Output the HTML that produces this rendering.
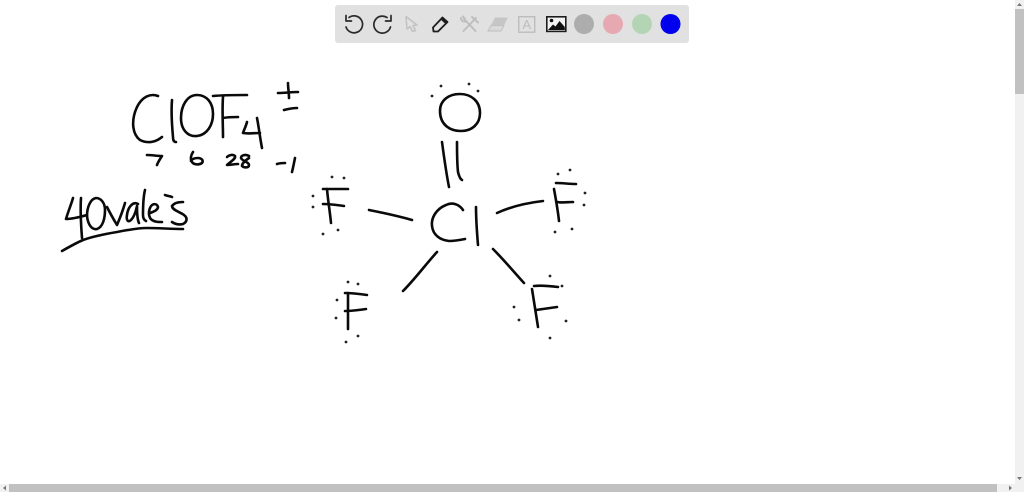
<!DOCTYPE html>
<html lang="en">
<head>
<meta charset="utf-8">
<title>ClOF4+ Lewis structure whiteboard</title>
<style>
html,body{margin:0;padding:0;width:1024px;height:492px;overflow:hidden;background:#fff;font-family:"Liberation Sans",sans-serif}
#page{position:relative;width:1024px;height:492px;overflow:hidden;background:#fff}
svg{position:absolute;left:0;top:0}
.ink path{fill:none;stroke:#0a0a0a;stroke-width:2.6;stroke-linecap:round;stroke-linejoin:round}
.vs{position:absolute;right:0;top:0;width:9px;height:492px;background:#f1f1f1}
.vt{position:absolute;left:0;top:9px;width:9px;height:85px;background:#c1c1c1}
.hs{position:absolute;left:0;bottom:0;width:1015px;height:8px;background:#f1f1f1}
.ht{position:absolute;left:9px;top:0;width:988px;height:8px;background:#c1c1c1}
</style>
</head>
<body>
<div id="page">
<div class="vs"><div class="vt"></div></div>
<div class="hs"><div class="ht"></div></div>
<svg width="1024" height="492" viewBox="0 0 1024 492" role="img" aria-label="ClOF4 plus: 7, 6, 28, minus 1; 40 valence electrons; Lewis structure with Cl bonded to O and four F">
<g class="ink">
<!-- ClOF4 -->
<path d="M158 96C150 93 142 97 137 107C131 120 132 134 140 140C148 144 156 142 162 137"/>
<path d="M172 100C171 112 172 126 173 137C173 140 174 142 176 142"/>
<path d="M197 95C187 95 181 106 181 118C181 130 188 137 197 136C207 135 213 125 213 114C213 103 207 95 197 95Z"/>
<path d="M213 96C224 95 236 95 247 95"/>
<path d="M223 97C222 110 223 124 223 137"/>
<path d="M223 118C228 117 233 117 238 117"/>
<path d="M247 122C246 126 244 130 243 133C249 134 254 133 260 133"/>
<path d="M257 118C259 128 260 138 262 148"/>
<!-- plus minus -->
<path d="M278 93C285 93 291 92 298 92"/>
<path d="M288 83C288 88 289 93 289 98"/>
<path d="M284 110C288 109 293 108 297 108"/>
<!-- valence counts -->
<path d="M147 155C152 155 157 156 162 156C160 159 158 162 157 165"/>
<path d="M193 152C191 155 190 159 192 162C194 165 199 165 202 163C204 160 201 158 198 158C195 158 192 159 191 161"/>
<path d="M227 157C229 155 233 154 235 156C236 159 230 162 227 165C231 165 234 164 238 164"/>
<path d="M249 156C246 154 241 155 241 158C242 161 249 162 249 165C249 168 244 168 242 166C242 163 246 160 249 158"/>
<path d="M277 164C280 163 282 163 285 163"/>
<path d="M295 158C294 163 293 168 292 172"/>
<!-- 40 vale's -->
<path d="M73 198C71 205 68 212 66 219C73 219 80 217 87 215"/>
<path d="M81 198C80 212 81 225 82 238"/>
<path d="M96 198C90 199 87 208 87 216C88 225 92 230 97 229C103 227 105 218 105 210C105 203 101 198 96 198Z"/>
<path d="M107 207C110 213 114 220 117 225C120 218 123 210 125 203"/>
<path d="M138 204C133 201 128 207 127 215C126 220 128 223 131 220C134 217 136 211 137 206C137 212 137 219 139 223"/>
<path d="M145 190C143 198 143 207 143 215C143 218 144 220 146 221"/>
<path d="M150 213C153 212 158 210 158 207C157 203 152 203 150 208C148 213 149 218 152 220C155 222 158 222 162 222"/>
<path d="M165 195C167 196 170 196 172 197"/>
<path d="M183 202C179 202 174 203 172 206C172 210 180 212 184 215C188 218 187 222 183 224C179 225 175 224 172 222"/>
<path d="M62 251C69 247 76 243 83 240C94 236 105 234 117 232C127 230 137 228 147 228C159 228 171 229 183 229"/>
<!-- O and double bond -->
<path d="M460 94C449 94 440 100 440 111C440 124 449 131 461 131C472 131 480 124 480 113C480 101 471 94 460 94Z"/>
<path d="M442 142C444 157 446 172 449 187"/>
<path d="M457 142C457 153 457 163 458 172C459 176 460 179 462 180"/>
<!-- Cl -->
<path d="M463 210C459 204 452 202 446 205C436 209 431 218 432 226C433 235 440 240 449 241C454 241 460 240 465 239"/>
<path d="M476 207C476 220 477 233 478 245"/>
<!-- bonds -->
<path d="M369 210C384 213 398 216 412 220"/>
<path d="M497 213C510 207 526 203 543 201"/>
<path d="M437 252C426 264 415 279 403 291"/>
<path d="M493 249C504 260 514 272 524 283"/>
<!-- F left -->
<path d="M323 189C331 189 340 189 348 189"/>
<path d="M327 189C328 201 330 212 331 223"/>
<path d="M323 204C330 204 337 205 344 206"/>
<!-- F right -->
<path d="M556 183C563 183 569 184 576 184"/>
<path d="M554 189C556 200 558 211 559 221"/>
<path d="M557 202C562 203 568 202 573 202"/>
<!-- F bottom left -->
<path d="M345 293C352 293 360 294 367 295"/>
<path d="M348 293C348 305 348 317 348 329"/>
<path d="M345 311C352 311 359 310 366 309"/>
<!-- F bottom right -->
<path d="M534 286C542 285 550 286 558 287"/>
<path d="M532 289C534 302 536 315 538 327"/>
<path d="M536 310C543 309 550 308 557 307"/>
</g>
<!-- lone pair dots -->
<g fill="#222">
<circle cx="432" cy="96" r="1.4"/><circle cx="441" cy="86" r="1.4"/><circle cx="469" cy="84" r="1.4"/><circle cx="478" cy="91" r="1.4"/>
<circle cx="332" cy="177" r="1.4"/><circle cx="344" cy="178" r="1.4"/><circle cx="313" cy="196" r="1.4"/><circle cx="313" cy="207" r="1.4"/><circle cx="323" cy="234" r="1.4"/><circle cx="338" cy="230" r="1.4"/>
<circle cx="558" cy="174" r="1.4"/><circle cx="570" cy="170" r="1.4"/><circle cx="585" cy="193" r="1.4"/><circle cx="584" cy="205" r="1.4"/><circle cx="555" cy="232" r="1.4"/><circle cx="572" cy="229" r="1.4"/>
<circle cx="348" cy="282" r="1.4"/><circle cx="358" cy="284" r="1.4"/><circle cx="337" cy="300" r="1.4"/><circle cx="336" cy="318" r="1.4"/><circle cx="346" cy="342" r="1.4"/><circle cx="358" cy="336" r="1.4"/>
<circle cx="550" cy="276" r="1.4"/><circle cx="562" cy="286" r="1.4"/><circle cx="514" cy="307" r="1.4"/><circle cx="519" cy="320" r="1.4"/><circle cx="566" cy="321" r="1.4"/><circle cx="550" cy="338" r="1.4"/>
</g>
<!-- toolbar -->
<rect x="335" y="5" width="354" height="38" rx="3" fill="#e1e1e1"/>
<g fill="none" stroke="#2b2b2b" stroke-width="1.7" stroke-linecap="round" stroke-linejoin="round">
<path d="M349 17.500A8.500 8.500 0 1 1 346 27"/><path d="M346 15.500V21H351.500"/>
<path d="M387 17.500A8.500 8.500 0 1 0 390.500 27"/><path d="M391 15.500V21H385.500"/>
</g>
<!-- pencil -->
<path d="M433 27.500L442.500 17.500L447.500 22L438 31.500H433.500Z" fill="none" stroke="#1e1e1e" stroke-width="1.800" stroke-linejoin="round"/>
<path d="M441 19L442.500 17.500L447.500 22L446 23.500Z" fill="#1e1e1e" stroke="#1e1e1e" stroke-width="1.400" stroke-linejoin="round"/>
<!-- cursor -->
<path d="M406 16.500L407 29L410 26.500L412.500 31.500L415.500 30.500L413 25.500L417 25Z" fill="none" stroke="#c2c2c2" stroke-width="1.500" stroke-linejoin="round"/>
<!-- tools -->
<g fill="none" stroke="#bdbdbd" stroke-width="1.900" stroke-linecap="round" stroke-linejoin="round">
<path d="M464 19L475.500 31"/>
<path d="M461 18C461 21 464 22.500 466 21M463 16.500L465 19"/>
<path d="M476 18L463.500 31"/>
<path d="M472 17L478 22.500"/>
</g>
<!-- eraser -->
<path d="M495 17.500H508L501 31H488Z" fill="#c6c6c6"/>
<path d="M488 31L491 25.500H504L501 31Z" fill="#d9d9d9" stroke="#c0c0c0"/>
<!-- text tool -->
<rect x="518.700" y="16.700" width="16" height="15.500" fill="none" stroke="#bdbdbd" stroke-width="1.400"/>
<text x="526.700" y="29" font-size="13" text-anchor="middle" fill="#bdbdbd" font-family="Liberation Sans, sans-serif">A</text>
<!-- image -->
<rect x="546.800" y="16.800" width="19" height="14.600" fill="#f3f3f3" stroke="#1c1c1c" stroke-width="1.600"/>
<circle cx="551.500" cy="20.500" r="1.800" fill="#111"/>
<path d="M548 30L553 24.500L555.500 26.500L559.500 21L564.800 27V30Z" fill="#111"/>
<circle cx="584" cy="24" r="10" fill="#adadad"/>
<circle cx="613" cy="24" r="10" fill="#e6a9b1"/>
<circle cx="642" cy="24" r="10" fill="#b4d5b4"/>
<circle cx="670.500" cy="24" r="10" fill="#0000ee"/>
<!-- scrollbar arrows -->
<g fill="#777">
<path d="M1017 6L1019.500 3L1022 6Z"/>
<path d="M1017 477L1019.500 480L1022 477Z"/>
<path d="M3 488L6 485.500V490.500Z"/>
<path d="M1009 485.500L1012 488L1009 490.500Z"/>
</g>
</svg>
</div>
</body>
</html>
